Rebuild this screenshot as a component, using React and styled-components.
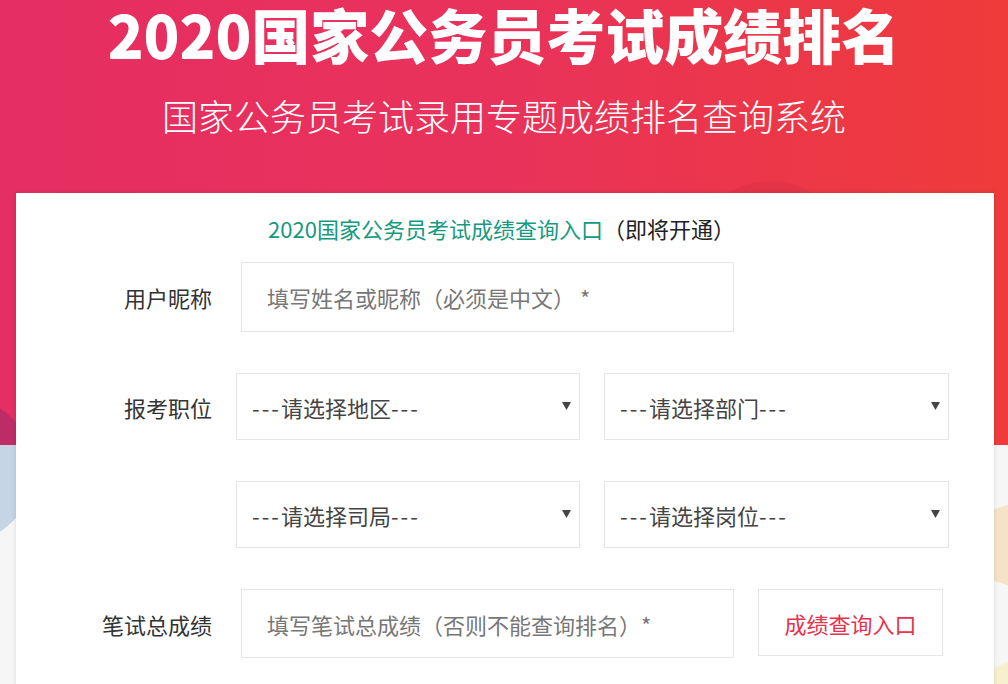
import React from 'react';
import styled, { createGlobalStyle } from 'styled-components';

const GlobalStyle = createGlobalStyle`
  html, body {
    margin: 0;
    padding: 0;
  }
  body {
    font-family: "Noto Sans CJK SC", "Noto Sans", sans-serif;
    background: #f6f6f6;
  }
  * {
    box-sizing: border-box;
  }
`;

const Page = styled.div`
  min-height: 684px;
  overflow: hidden;
  background:
    radial-gradient(circle at -40px 470px, rgba(90, 40, 120, 0.28) 0 73px, transparent 74px) top left / 100% 445px no-repeat,
    radial-gradient(circle at 770px 260px, rgba(120, 10, 40, 0.08) 0 78px, transparent 80px) top left / 100% 445px no-repeat,
    linear-gradient(90deg, #e52e62 0%, #e9325a 50%, #ef3b3a 100%) top left / 100% 445px no-repeat,
    radial-gradient(circle at -40px 470px, #c5d5e6 0 73px, transparent 74px),
    radial-gradient(ellipse 90px 46px at 1050px 545px, #f6e2c7 0 98%, transparent 100%),
    radial-gradient(circle at 1060px 780px, #f8efcf 0 128px, transparent 130px),
    radial-gradient(circle at -220px 820px, #edf2f6 0 252px, transparent 254px),
    #f6f6f6;
`;

const Header = styled.header`
  height: 193px;
  text-align: center;
  color: #fff;
`;

const Title = styled.h1`
  margin: 0;
  font-size: 59px;
  line-height: 68px;
  font-weight: 900;
`;

const Subtitle = styled.p`
  margin: 25px 0 0;
  font-size: 36px;
  line-height: 44px;
  font-weight: 300;
`;

const Card = styled.main`
  margin: 0 14px 0 16px;
  padding: 20px 0 40px;
  background: #fff;
  box-shadow: 0 0 5px rgba(0, 0, 0, 0.12);
  min-height: 491px;
`;

const Notice = styled.div`
  padding-right: 7px;
  margin-bottom: 19px;
  text-align: center;
  font-size: 22px;
  line-height: 30px;
  color: #222;
`;

const NoticeLink = styled.span`
  color: #159a80;
`;

const Form = styled.form`
  display: flex;
  flex-direction: column;
  gap: 41px;
  padding-left: 76px;
`;

const Row = styled.div`
  display: flex;
  align-items: center;
  height: ${(p) => p.$h}px;
`;

const Label = styled.label`
  flex: none;
  width: 120px;
  margin-right: 24px;
  text-align: right;
  font-size: 22px;
  line-height: 30px;
  color: #333;
`;

const TextInput = styled.input`
  width: 493px;
  height: ${(p) => p.$h}px;
  margin-left: 5px;
  padding: 0 0 0 25px;
  border: 1px solid #e5e5e5;
  outline: none;
  background: #fff;
  font-family: inherit;
  font-size: 22px;
  color: #333;
  &::placeholder {
    color: #777;
  }
`;

const SelectGroup = styled.div`
  display: flex;
  gap: 24px;
`;

const SelectBox = styled.div`
  display: flex;
  align-items: center;
  justify-content: space-between;
  width: ${(p) => p.$w}px;
  height: 67px;
  padding: 0 8px 0 15px;
  border: 1px solid #e5e5e5;
  background: #fff;
  font-size: 22px;
  color: #444;
  cursor: pointer;
`;

const Dash = styled.span`
  letter-spacing: 2px;
`;

const Caret = styled.svg`
  width: 9px;
  height: 8px;
  margin-top: -2px;
  fill: #444;
`;

const QueryButton = styled.button`
  width: 185px;
  height: 67px;
  margin-left: 24px;
  align-self: flex-start;
  border: 1px solid #e5e5e5;
  background: #fff;
  font-family: inherit;
  font-size: 22px;
  color: #e8314a;
  cursor: pointer;
`;

const Select = ({ text, w }) => (
  <SelectBox $w={w}>
    <span>
      <Dash>---</Dash>
      {text}
      <Dash>---</Dash>
    </span>
    <Caret viewBox="0 0 9 8">
      <polygon points="0,0 9,0 4.5,8" />
    </Caret>
  </SelectBox>
);

export default function App() {
  return (
    <>
      <GlobalStyle />
      <Page>
        <Header>
          <Title>2020国家公务员考试成绩排名</Title>
          <Subtitle>国家公务员考试录用专题成绩排名查询系统</Subtitle>
        </Header>
        <Card>
          <Notice>
            <NoticeLink>2020国家公务员考试成绩查询入口</NoticeLink>（即将开通）
          </Notice>
          <Form onSubmit={(e) => e.preventDefault()}>
            <Row $h={70}>
              <Label>用户昵称</Label>
              <TextInput $h={70} placeholder="填写姓名或昵称（必须是中文） *" />
            </Row>
            <Row $h={67}>
              <Label>报考职位</Label>
              <SelectGroup>
                <Select w={344} text="请选择地区" />
                <Select w={345} text="请选择部门" />
              </SelectGroup>
            </Row>
            <Row $h={67}>
              <Label />
              <SelectGroup>
                <Select w={344} text="请选择司局" />
                <Select w={345} text="请选择岗位" />
              </SelectGroup>
            </Row>
            <Row $h={69}>
              <Label>笔试总成绩</Label>
              <TextInput $h={69} placeholder="填写笔试总成绩（否则不能查询排名）*" />
              <QueryButton type="button">成绩查询入口</QueryButton>
            </Row>
          </Form>
        </Card>
      </Page>
    </>
  );
}
